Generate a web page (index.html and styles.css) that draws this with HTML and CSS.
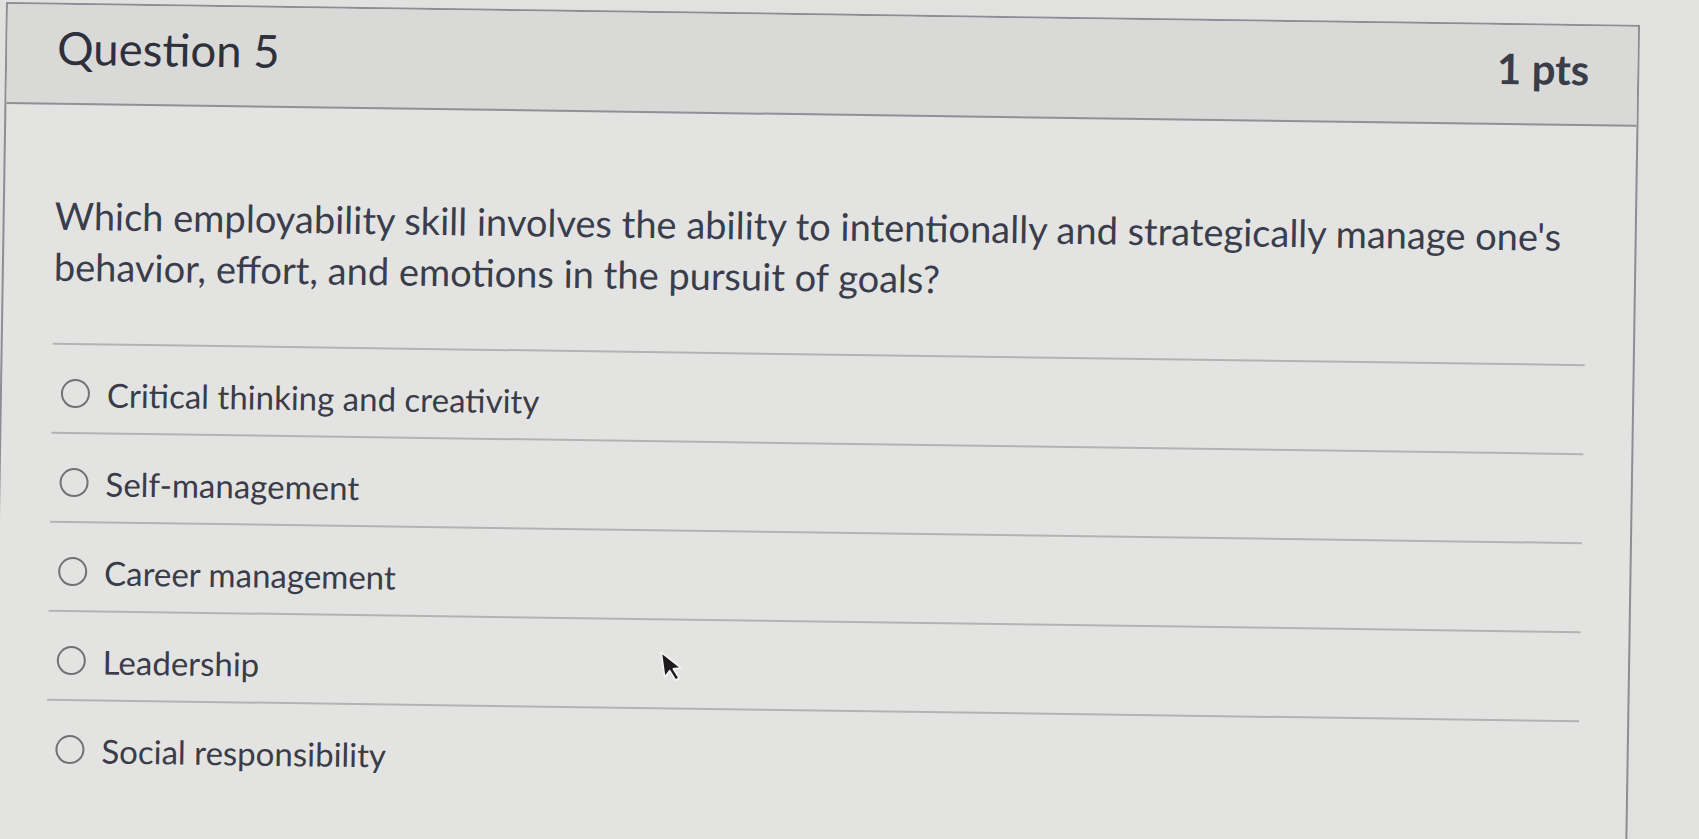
FILE: index.html
```html
<!DOCTYPE html>
<html lang="en">
<head>
<meta charset="utf-8">
<title>Question 5</title>
<link rel="stylesheet" href="styles.css">
</head>
<body>
<div class="card">
  <div class="card-header">
    <h2 class="q-title">Question 5</h2>
    <span class="q-points">1 pts</span>
  </div>
  <div class="card-body">
    <p class="q-text">Which employability skill involves the ability to intentionally and strategically manage one's<br>behavior, effort, and emotions in the pursuit of goals?</p>
    <ul class="answers">
      <li class="answer"><span class="radio"></span><span class="label">Critical thinking and creativity</span></li>
      <li class="answer"><span class="radio"></span><span class="label">Self-management</span></li>
      <li class="answer"><span class="radio"></span><span class="label">Career management</span></li>
      <li class="answer"><span class="radio"></span><span class="label">Leadership</span></li>
      <li class="answer"><span class="radio"></span><span class="label">Social responsibility</span></li>
    </ul>
  </div>
</div>
<svg class="cursor" width="24" height="36" viewBox="0 0 18 28" aria-hidden="true">
  <path d="M1.5 1.5 L1.5 21 L6 16.5 L9.5 24.5 L12.5 23.2 L9 15.5 L15 15.5 Z" fill="#1e1a1e" stroke="#f4f4f4" stroke-width="1.3" stroke-linejoin="round"/>
</svg>
</body>
</html>
```

FILE: styles.css
```css
html, body {
  margin: 0;
  padding: 0;
}

body {
  width: 1699px;
  height: 839px;
  overflow: hidden;
  background: #e1e2e0;
  font-family: Lato, "Open Sans", "Liberation Sans", sans-serif;
  color: #383b48;
  position: relative;
}

/* the photo of the screen is slightly skewed: reproduce it with one transform */
.card {
  margin: 2px 0 0 6px;
  width: 1634px;
  height: 900px;
  box-sizing: border-box;
  border: 2px solid #8c8e93;
  border-bottom: none;
  background: #e3e4e2;
  transform: matrix(1, 0.014, -0.0155, 1, 0, 0);
  transform-origin: 0 0;
}

.card-header {
  height: 100px;
  box-sizing: border-box;
  background: #d9dad8;
  border-bottom: 2px solid #8f9196;
  display: flex;
  align-items: center;
  justify-content: space-between;
  padding: 0 48px 12px 50px;
}

.q-title {
  margin: 0;
  font-size: 45.5px;
  font-weight: 400;
  color: #2e303c;
  line-height: 1;
}

.q-points {
  font-size: 42px;
  font-weight: 700;
  color: #3a3c47;
  line-height: 1;
}

.card-body {
  padding: 85px 48px 0 50px;
}

.q-text {
  margin: 0;
  font-size: 38px;
  line-height: 51px;
  color: #3a3d4c;
}

.answers {
  list-style: none;
  margin: 51px 0 0 0;
  padding: 0;
}

.answer {
  display: flex;
  align-items: center;
  gap: 17px;
  height: 89px;
  box-sizing: border-box;
  border-top: 2px solid #b2b3b4;
  padding: 10px 0 0 9px;
}

.radio {
  width: 25px;
  height: 25px;
  border: 2.5px solid #707175;
  border-radius: 50%;
  flex: none;
}

.label {
  font-size: 33px;
  color: #3a3c49;
}

.cursor {
  position: absolute;
  left: 661px;
  top: 649px;
  transform: rotate(-8deg);
}
```
